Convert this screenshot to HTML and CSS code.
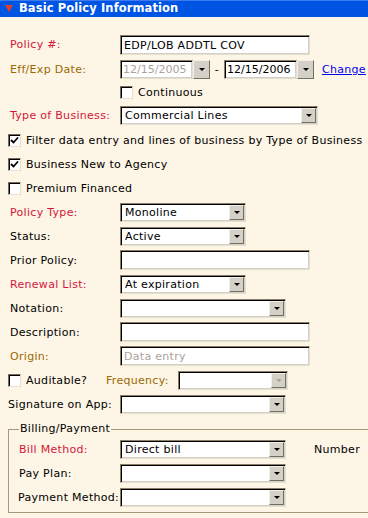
FILE: index.html
```html
<!DOCTYPE html>
<html lang="en">
<head>
    <meta charset="UTF-8">
    <title>Basic Policy Information</title>
    <link rel="stylesheet" href="styles.css">
</head>
<body>
    <div class="panel-head"><span class="toggle"></span>Basic Policy Information</div>
    <div class="form">
        <div class="row first">
            <label class="lbl req">Policy #:</label>
            <input class="text" type="text" value="EDP/LOB ADDTL COV">
        </div>
        <div class="row">
            <label class="lbl alt">Eff/Exp Date:</label>
            <span class="date">
                <input class="text date-input" type="text" value="12/15/2005" disabled>
                <span class="btn"><i></i></span>
            </span>
            <span class="dash">-</span>
            <span class="date">
                <input class="text date-input" type="text" value="12/15/2006">
                <span class="btn"><i></i></span>
            </span>
            <a href="#" class="link">Change</a>
        </div>
        <div class="row short">
            <span class="spacer"></span>
            <label class="check"><span class="box"></span>Continuous</label>
        </div>
        <div class="row tall">
            <label class="lbl req">Type of Business:</label>
            <div class="select w198"><span class="val">Commercial Lines</span><span class="btn"><i></i></span></div>
        </div>
        <div class="row flush">
            <label class="check"><span class="box on"><svg viewBox="0 0 9 9"><path d="M1 4 L3.5 6.5 L8 1.5" /></svg></span>Filter data entry and lines of business by Type of Business</label>
        </div>
        <div class="row flush">
            <label class="check"><span class="box on"><svg viewBox="0 0 9 9"><path d="M1 4 L3.5 6.5 L8 1.5" /></svg></span>Business New to Agency</label>
        </div>
        <div class="row flush">
            <label class="check"><span class="box"></span>Premium Financed</label>
        </div>
        <div class="row">
            <label class="lbl req">Policy Type:</label>
            <div class="select w126"><span class="val">Monoline</span><span class="btn"><i></i></span></div>
        </div>
        <div class="row">
            <label class="lbl">Status:</label>
            <div class="select w126"><span class="val">Active</span><span class="btn"><i></i></span></div>
        </div>
        <div class="row">
            <label class="lbl">Prior Policy:</label>
            <input class="text" type="text" value="">
        </div>
        <div class="row">
            <label class="lbl req">Renewal List:</label>
            <div class="select w126"><span class="val">At expiration</span><span class="btn"><i></i></span></div>
        </div>
        <div class="row">
            <label class="lbl">Notation:</label>
            <div class="select w166"><span class="val"></span><span class="btn"><i></i></span></div>
        </div>
        <div class="row">
            <label class="lbl">Description:</label>
            <input class="text" type="text" value="">
        </div>
        <div class="row">
            <label class="lbl alt">Origin:</label>
            <input class="text" type="text" value="Data entry" disabled>
        </div>
        <div class="row flush">
            <label class="check audit"><span class="box"></span>Auditable?</label>
            <label class="lbl alt freq">Frequency:</label>
            <div class="select w110 off"><span class="val"></span><span class="btn"><i></i></span></div>
        </div>
        <div class="row flush">
            <label class="lbl sig">Signature on App:</label>
            <div class="select w166"><span class="val"></span><span class="btn"><i></i></span></div>
        </div>

        <fieldset class="billing">
            <legend>Billing/Payment</legend>
            <div class="row">
                <label class="lbl req">Bill Method:</label>
                <div class="select w166"><span class="val">Direct bill</span><span class="btn"><i></i></span></div>
                <span class="number">Number</span>
            </div>
            <div class="row">
                <label class="lbl">Pay Plan:</label>
                <div class="select w166"><span class="val"></span><span class="btn"><i></i></span></div>
            </div>
            <div class="row">
                <label class="lbl pm">Payment Method:</label>
                <div class="select w166"><span class="val"></span><span class="btn"><i></i></span></div>
            </div>
        </fieldset>
    </div>
</body>
</html>
```

FILE: styles.css
```css
html, body {
    margin: 0;
    padding: 0;
}

body {
    width: 368px;
    height: 518px;
    overflow: hidden;
    background-color: #fdf5e6;
    font-family: "DejaVu Sans", Verdana, sans-serif;
    font-size: 11px;
    letter-spacing: 0.3px;
    color: #000;
}

.panel-head {
    height: 17px;
    background-color: #0054e3;
    border-top: 1px solid #3b7df0;
    box-sizing: border-box;
    color: #fff;
    font-weight: bold;
    font-size: 11.5px;
    letter-spacing: 0.1px;
    line-height: 15px;
    padding-left: 19px;
    position: relative;
}

.toggle {
    position: absolute;
    left: 5px;
    top: 4px;
    width: 0;
    height: 0;
    border-left: 4px solid transparent;
    border-right: 4px solid transparent;
    border-top: 7px solid #e0402a;
}

.form {
    padding: 15px 0 0 10px;
}

.row {
    display: flex;
    align-items: center;
    height: 24px;
}

.row.first {
    height: 25px;
}

.row.short {
    height: 22px;
}

.row.tall {
    height: 25px;
}

.row.flush {
    margin-left: -2px;
}

.lbl {
    width: 110px;
    flex: none;
    white-space: nowrap;
}

.req {
    color: #d4153a;
}

.alt {
    color: #9a6a00;
}

.spacer {
    width: 110px;
    flex: none;
}

.text {
    width: 190px;
    height: 20px;
    box-sizing: border-box;
    margin: 0;
    padding: 1px 3px 0;
    font-family: inherit;
    font-size: 11px;
    letter-spacing: 0.3px;
    color: #000;
    background-color: #fff;
    border: 1px solid;
    border-color: #8a7f66 #e4dfcf #e4dfcf #8a7f66;
    box-shadow: inset 1px 1px 0 #000, inset -1px -1px 0 #d4d0c8;
    outline: none;
}

.text:disabled {
    color: #a8a39a;
}

.date {
    display: flex;
    align-items: stretch;
    height: 19px;
}

.date-input {
    width: 73px;
    height: 19px;
    padding: 1px 1px 0 2px;
    letter-spacing: 0;
}

.date .btn {
    width: 17px;
    border: 1px solid;
    border-color: #f2efe6 #716f64 #716f64 #f2efe6;
    box-sizing: border-box;
}

.dash {
    width: 14px;
    text-align: center;
}

.link {
    margin-left: 8px;
    color: #0000ee;
}

.select {
    height: 19px;
    box-sizing: border-box;
    display: flex;
    background-color: #fff;
    border: 1px solid;
    border-color: #8a7f66 #e4dfcf #e4dfcf #8a7f66;
    box-shadow: inset 1px 1px 0 #000, inset -1px -1px 0 #d4d0c8;
    padding: 1px;
}

.select .val {
    flex: 1;
    line-height: 16px;
    padding-left: 3px;
    white-space: nowrap;
    overflow: hidden;
}

.btn {
    width: 15px;
    flex: none;
    background-color: #d4d0c8;
    border: 1px solid;
    border-color: #f2efe6 #716f64 #716f64 #f2efe6;
    box-sizing: border-box;
    display: flex;
    align-items: center;
    justify-content: center;
}

.btn i {
    width: 0;
    height: 0;
    border-left: 3px solid transparent;
    border-right: 3px solid transparent;
    border-top: 3px solid #000;
}

.select.off .btn i {
    border-top-color: #a8a39a;
}

.w110 { width: 110px; }
.w126 { width: 126px; }
.w166 { width: 166px; }
.w198 { width: 198px; }

.check {
    display: flex;
    align-items: center;
    white-space: nowrap;
}

.box {
    width: 13px;
    height: 13px;
    box-sizing: border-box;
    margin-right: 5px;
    background-color: #fff;
    border: 1px solid;
    border-color: #716f64 #e4dfcf #e4dfcf #716f64;
    box-shadow: inset 1px 1px 0 #000;
    display: flex;
    align-items: center;
    justify-content: center;
}

.box svg {
    width: 9px;
    height: 9px;
}

.box path {
    fill: none;
    stroke: #000;
    stroke-width: 1.8;
}

.audit {
    width: 98px;
    flex: none;
}

.freq {
    width: 72px;
}

.sig {
    width: 112px;
}

.billing {
    margin: 5px 0 0 -2px;
    box-sizing: border-box;
    border: 1px solid #a8987a;
    border-right: none;
    padding: 0 0 3px 10px;
    min-width: 0;
}

.billing legend {
    padding: 0 1px;
    margin-left: 0;
    line-height: 16px;
}

.billing .lbl {
    width: 101px;
}

.billing .pm {
    margin-left: -1px;
    width: 102px;
}

.number {
    margin-left: 28px;
}
```
